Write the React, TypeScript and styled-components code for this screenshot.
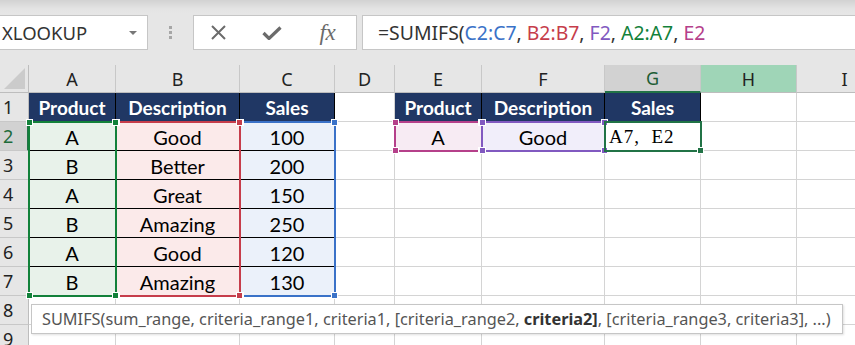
import React from 'react';
import styled, { createGlobalStyle } from 'styled-components';

const GlobalStyle = createGlobalStyle`
	html, body {
		margin: 0;
		padding: 0;
		background: #ffffff;
		overflow: hidden;
	}
	* {
		box-sizing: border-box;
	}
`;

const UI_FONT = `'Noto Sans', 'Open Sans', sans-serif`;
const CELL_FONT = `Lato, 'Noto Sans', sans-serif`;

const COLS = [
	{ key: '', w: 29 },
	{ key: 'A', w: 87 },
	{ key: 'B', w: 124 },
	{ key: 'C', w: 95 },
	{ key: 'D', w: 60 },
	{ key: 'E', w: 87 },
	{ key: 'F', w: 123 },
	{ key: 'G', w: 96 },
	{ key: 'H', w: 96 },
	{ key: 'I', w: 96 },
];
const HEAD_H = 28;
const ROW_H = 29;

const colX = (i: number) => COLS.slice(0, i).reduce((s, c) => s + c.w, 0);
const rowY = (r: number) => HEAD_H + (r - 1) * ROW_H;

type Tint = 'none' | 'green' | 'red' | 'blue' | 'pink' | 'lilac';
const TINTS: Record<Tint, string> = {
	none: 'transparent',
	green: '#e8f2ea',
	red: '#fbeaea',
	blue: '#ebf1fa',
	pink: '#f7ebf3',
	lilac: '#f1eefa',
};

type CellDef = { text?: string; head?: boolean; tint?: Tint; boxed?: boolean; mono?: boolean };

const hdr = (text: string): CellDef => ({ text, head: true, boxed: true });

const ROWS: CellDef[][] = [
	[hdr('Product'), hdr('Description'), hdr('Sales'), {}, hdr('Product'), hdr('Description'), hdr('Sales'), {}, {}],
	[
		{ text: 'A', tint: 'green', boxed: true },
		{ text: 'Good', tint: 'red', boxed: true },
		{ text: '100', tint: 'blue', boxed: true },
		{},
		{ text: 'A', tint: 'pink' },
		{ text: 'Good', tint: 'lilac' },
		{ text: 'A7,  E2', mono: true },
		{},
		{},
	],
	...[
		['B', 'Better', '200'],
		['A', 'Great', '150'],
		['B', 'Amazing', '250'],
		['A', 'Good', '120'],
		['B', 'Amazing', '130'],
	].map(([a, b, c]) => [
		{ text: a, tint: 'green' as Tint, boxed: true },
		{ text: b, tint: 'red' as Tint, boxed: true },
		{ text: c, tint: 'blue' as Tint, boxed: true },
		{},
		{},
		{},
		{},
		{},
		{},
	]),
	Array.from({ length: 9 }, () => ({})),
	Array.from({ length: 9 }, () => ({})),
];

const RANGES = [
	{ col: 3, r1: 2, r2: 7, color: '#3a72c8' },
	{ col: 2, r1: 2, r2: 7, color: '#c63d4b' },
	{ col: 1, r1: 2, r2: 7, color: '#12813a' },
	{ col: 5, r1: 2, r2: 2, color: '#b5408a' },
	{ col: 6, r1: 2, r2: 2, color: '#8159c0' },
];

/* ---------- formula bar ---------- */

const TopBar = styled.div`
	height: 65px;
	display: flex;
	align-items: flex-start;
	padding-top: 15px;
	background: linear-gradient(#d2d2d2 0, #e4e4e4 9px, #e6e6e6 14px);
`;

const NameBox = styled.div`
	width: 148px;
	height: 35px;
	background: #fff;
	border: 1px solid #c6c6c6;
	border-left: none;
	display: flex;
	align-items: center;
	justify-content: space-between;
	padding: 0 10px 0 2px;
	font: 18.5px ${UI_FONT};
	color: #333;
`;

const Caret = styled.span`
	width: 0;
	height: 0;
	border-left: 4px solid transparent;
	border-right: 4px solid transparent;
	border-top: 4px solid #777;
`;

const Grip = styled.div`
	width: 45px;
	height: 35px;
	display: flex;
	flex-direction: column;
	align-items: center;
	justify-content: center;
	gap: 2px;
	& > span {
		width: 3px;
		height: 3px;
		background: #a6a6a6;
	}
`;

const FnBox = styled.div`
	width: 164px;
	height: 35px;
	background: #fff;
	border: 1px solid #c6c6c6;
	display: flex;
	align-items: center;
	justify-content: space-around;
	padding: 0 4px;
`;

const FnButton = styled.span<{ $shift?: number }>`
	width: 40px;
	display: flex;
	align-items: center;
	justify-content: center;
	margin-left: ${(p) => p.$shift ?? 0}px;
	color: #6b6b6b;
`;

const FxText = styled.span`
	font: italic 23px 'Liberation Serif', serif;
	color: #6b6b6b;
	letter-spacing: -0.5px;
	margin-left: 4px;
`;

const FormulaBox = styled.div`
	flex: 1;
	height: 35px;
	margin-left: 5px;
	background: #fff;
	border: 1px solid #c6c6c6;
	border-right: none;
	display: flex;
	align-items: center;
	padding-left: 15px;
	font: 19.4px ${UI_FONT};
	color: #333;
	white-space: pre;
`;

const Ref = styled.span<{ $c: string }>`
	color: ${(p) => p.$c};
`;

/* ---------- sheet ---------- */

const Sheet = styled.div`
	position: relative;
	display: grid;
	grid-template-columns: ${COLS.map((c) => c.w + 'px').join(' ')};
	grid-template-rows: ${HEAD_H}px repeat(9, ${ROW_H}px);
`;

const Corner = styled.div`
	background: #e6e6e6;
	border-right: 1px solid #bdbdbd;
	border-bottom: 1px solid #bdbdbd;
	position: relative;
	overflow: hidden;
	&::after {
		content: '';
		position: absolute;
		right: 3px;
		bottom: 3px;
		border-left: 21px solid transparent;
		border-bottom: 21px solid #cbcbcb;
	}
`;

const ColHead = styled.div<{ $state?: 'active' | 'hover' }>`
	display: flex;
	align-items: center;
	justify-content: center;
	font: 18px ${UI_FONT};
	color: ${(p) => (p.$state === 'active' ? '#1d5d35' : '#222')};
	background: ${(p) => (p.$state === 'active' ? '#d2d2d2' : p.$state === 'hover' ? '#9fd5b7' : '#e6e6e6')};
	border-right: 1px solid #c8c8c8;
	border-bottom: ${(p) => (p.$state === 'active' ? '2px solid #217346' : '1px solid #bdbdbd')};
`;

const RowHead = styled.div<{ $active?: boolean }>`
	display: flex;
	align-items: center;
	padding-left: 3px;
	font: 18px ${UI_FONT};
	color: ${(p) => (p.$active ? '#1d6b3a' : '#222')};
	background: ${(p) => (p.$active ? '#d2d2d2' : '#e6e6e6')};
	border-bottom: 1px solid #c8c8c8;
	border-right: ${(p) => (p.$active ? '2px solid #217346' : '1px solid #bdbdbd')};
`;

const Cell = styled.div<{ $head?: boolean; $tint: Tint; $boxed?: boolean; $mono?: boolean }>`
	display: flex;
	align-items: center;
	justify-content: ${(p) => (p.$mono ? 'flex-start' : 'center')};
	padding-left: ${(p) => (p.$mono ? '4px' : '0')};
	padding-top: 1px;
	white-space: nowrap;
	font: ${(p) => (p.$head ? 'bold 19px' : 'normal 20px')} ${CELL_FONT};
	${(p) => p.$mono && `font: 19px 'Liberation Serif', serif; letter-spacing: 1px; white-space: pre;`}
	color: ${(p) => (p.$head ? '#fff' : '#000')};
	background: ${(p) => (p.$head ? '#203764' : TINTS[p.$tint])};
	border-right: 1px solid ${(p) => (p.$boxed ? '#000' : '#d4d4d4')};
	border-bottom: 1px solid ${(p) => (p.$boxed ? '#000' : '#d4d4d4')};
`;

const RangeBox = styled.div<{ $c: string }>`
	position: absolute;
	border: 2px solid ${(p) => p.$c};
	pointer-events: none;
`;

const Handle = styled.span<{ $c: string; $h: 'l' | 'r'; $v: 't' | 'b' }>`
	position: absolute;
	width: 7px;
	height: 7px;
	background: ${(p) => p.$c};
	border: 1px solid #fff;
	${(p) => (p.$h === 'l' ? 'left: -4px;' : 'right: -4px;')}
	${(p) => (p.$v === 't' ? 'top: -4px;' : 'bottom: -4px;')}
`;

const Tooltip = styled.div`
	position: absolute;
	left: 31px;
	top: 239px;
	width: 812px;
	height: 30px;
	background: #fff;
	border: 1px solid #c6c6c6;
	box-shadow: 1px 1px 2px rgba(0, 0, 0, 0.12);
	display: flex;
	align-items: center;
	padding-left: 10px;
	font: 16.3px ${UI_FONT};
	color: #555;
	white-space: pre;
	& b {
		color: #333;
	}
`;

const XIcon = () => (
	<svg width="17" height="15" viewBox="0 0 17 15">
		<path d="M2 1 L15 14 M15 1 L2 14" stroke="#6b6b6b" strokeWidth="2" fill="none" />
	</svg>
);

const CheckIcon = () => (
	<svg width="20" height="14" viewBox="0 0 20 14">
		<path d="M1.5 7 L7 12.5 L18.5 1.5" stroke="#6b6b6b" strokeWidth="3.2" fill="none" />
	</svg>
);

const App = () => {
	return (
		<>
			<GlobalStyle />
			<TopBar>
				<NameBox>
					XLOOKUP
					<Caret />
				</NameBox>
				<Grip>
					<span />
					<span />
					<span />
				</Grip>
				<FnBox>
					<FnButton $shift={-6}>
						<XIcon />
					</FnButton>
					<FnButton>
						<CheckIcon />
					</FnButton>
					<FnButton>
						<FxText>fx</FxText>
					</FnButton>
				</FnBox>
				<FormulaBox>
					<span>
						{'=SUMIFS('}
						<Ref $c="#3a72c8">C2:C7</Ref>
						{', '}
						<Ref $c="#c63d4b">B2:B7</Ref>
						{', '}
						<Ref $c="#8159c0">F2</Ref>
						{', '}
						<Ref $c="#12813a">A2:A7</Ref>
						{', '}
						<Ref $c="#b5408a">E2</Ref>
					</span>
				</FormulaBox>
			</TopBar>
			<Sheet>
				<Corner />
				{COLS.slice(1).map((c) => (
					<ColHead key={c.key} $state={c.key === 'G' ? 'active' : c.key === 'H' ? 'hover' : undefined}>
						{c.key}
					</ColHead>
				))}
				{ROWS.map((row, ri) => (
					<React.Fragment key={ri}>
						<RowHead $active={ri === 1}>{ri + 1}</RowHead>
						{row.map((cell, ci) => (
							<Cell
								key={ci}
								$head={cell.head}
								$tint={cell.tint ?? 'none'}
								$boxed={cell.boxed}
								$mono={cell.mono}
							>
								{cell.text}
							</Cell>
						))}
					</React.Fragment>
				))}
				{RANGES.map((r, i) => (
					<RangeBox
						key={i}
						$c={r.color}
						style={{
							left: colX(r.col) - 1,
							top: rowY(r.r1) - 1,
							width: COLS[r.col].w + 2,
							height: (r.r2 - r.r1 + 1) * ROW_H + 2,
						}}
					>
						<Handle $c={r.color} $h="l" $v="t" />
						<Handle $c={r.color} $h="r" $v="t" />
						<Handle $c={r.color} $h="l" $v="b" />
						<Handle $c={r.color} $h="r" $v="b" />
					</RangeBox>
				))}
				<RangeBox
					$c="#217346"
					style={{ left: colX(7) - 1, top: rowY(2) - 1, width: COLS[7].w + 2, height: ROW_H + 2 }}
				>
					<Handle $c="#217346" $h="r" $v="b" />
				</RangeBox>
				<Tooltip>
					<span>
						{'SUMIFS(sum_range, criteria_range1, criteria1, [criteria_range2, '}
						<b>criteria2]</b>
						{', [criteria_range3, criteria3], ...)'}
					</span>
				</Tooltip>
			</Sheet>
		</>
	);
};

export default App;
